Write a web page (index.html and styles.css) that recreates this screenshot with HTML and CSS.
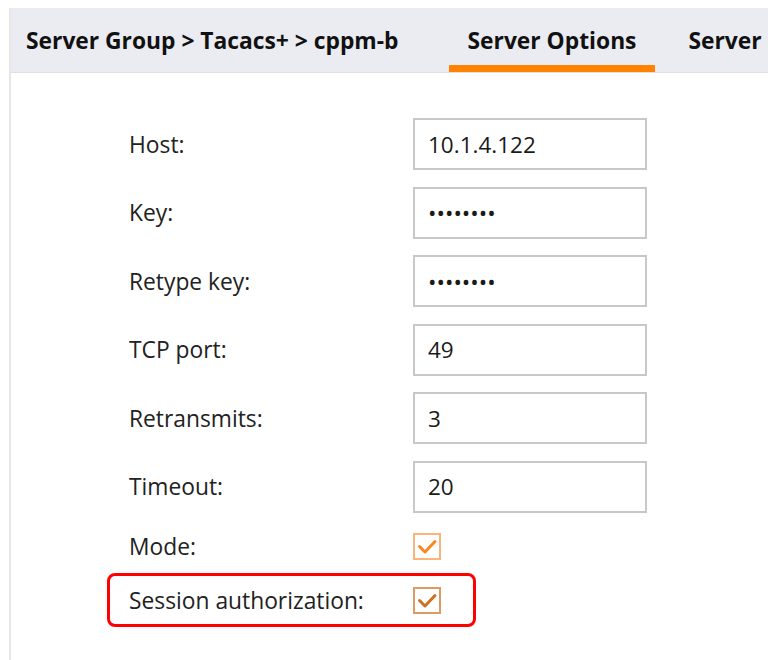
FILE: index.html
```html
<!DOCTYPE html>
<html lang="en">
<head>
<meta charset="utf-8">
<title>Server Options</title>
<link rel="stylesheet" href="styles.css">
</head>
<body>
<div class="page">
  <div class="header">
    <div class="crumb">Server Group &gt; Tacacs+ &gt; cppm-b</div>
    <div class="tab active">Server Options</div>
    <div class="tab">Server</div>
  </div>
  <div class="form">
    <div class="row">
      <label class="label" for="host">Host:</label>
      <input class="field" id="host" type="text" value="10.1.4.122">
    </div>
    <div class="row">
      <label class="label" for="key">Key:</label>
      <input class="field" id="key" type="password" value="abcdefgh">
    </div>
    <div class="row">
      <label class="label" for="rekey">Retype key:</label>
      <input class="field" id="rekey" type="password" value="abcdefgh">
    </div>
    <div class="row">
      <label class="label" for="port">TCP port:</label>
      <input class="field" id="port" type="text" value="49">
    </div>
    <div class="row">
      <label class="label" for="retr">Retransmits:</label>
      <input class="field" id="retr" type="text" value="3">
    </div>
    <div class="row">
      <label class="label" for="timeout">Timeout:</label>
      <input class="field" id="timeout" type="text" value="20">
    </div>
    <div class="row check-row">
      <span class="label">Mode:</span>
      <span class="checkbox">
        <svg viewBox="0 0 27 27" width="27" height="27"><path d="M5.5 13.5 L11 19 L21 8.5" fill="none" stroke="#f7891f" stroke-width="3" stroke-linecap="round" stroke-linejoin="round"/></svg>
      </span>
    </div>
    <div class="row check-row highlight">
      <span class="label">Session authorization:</span>
      <span class="checkbox dark">
        <svg viewBox="0 0 27 27" width="27" height="27"><path d="M5.5 13.5 L11 19 L21 8.5" fill="none" stroke="#cc7220" stroke-width="3" stroke-linecap="round" stroke-linejoin="round"/></svg>
      </span>
    </div>
  </div>
</div>
</body>
</html>
```

FILE: styles.css
```css
html, body {
  margin: 0;
  padding: 0;
  background: #ffffff;
}

body {
  font-family: "Open Sans", "Noto Sans", "Liberation Sans", sans-serif;
  color: #1e1e1e;
  width: 768px;
  height: 660px;
  overflow: hidden;
}

.page {
  margin-left: 9px;
  border-left: 2px solid #e6e6e6;
  height: 660px;
  box-sizing: border-box;
}

.header {
  margin-top: 8px;
  height: 64px;
  background: #ebecf1;
  border-bottom: 1px solid #dfe0e5;
  display: flex;
  align-items: stretch;
  white-space: nowrap;
  overflow: hidden;
  font-weight: 700;
  font-size: 22.8px;
  color: #111111;
}

.crumb {
  display: flex;
  align-items: center;
  padding-left: 15px;
}

.tab {
  display: flex;
  align-items: center;
  padding: 0 19px;
  border-top: 7px solid transparent;
  border-bottom: 7px solid transparent;
}

.tab + .tab {
  margin-left: 14px;
}

.tab.active {
  margin-left: 50px;
  border-bottom-color: #ff8200;
}

.form {
  display: flex;
  flex-direction: column;
  gap: 16.5px;
  padding: 45px 0 0 118px;
}

.row {
  display: grid;
  grid-template-columns: 284px 234px;
  align-items: center;
  height: 52px;
}

.label {
  font-size: 22.8px;
  color: #222222;
}

.field {
  box-sizing: border-box;
  width: 234px;
  height: 52px;
  margin: 0;
  border: 2px solid #c8c8c8;
  border-radius: 0;
  padding: 0 13px;
  font-family: "Open Sans", "Noto Sans", sans-serif;
  font-size: 22.5px;
  color: #1a1a1a;
  background: #ffffff;
  outline: none;
}

.check-row {
  height: 34px;
}

.checkbox {
  box-sizing: border-box;
  width: 28px;
  height: 27px;
  border: 2px solid #fbb47a;
  display: flex;
  align-items: center;
  justify-content: center;
}

.checkbox svg {
  display: block;
  flex: none;
}

.checkbox.dark {
  border-color: #dd9a62;
}

.highlight {
  box-sizing: border-box;
  height: 54px;
  width: 369px;
  margin-top: -6.5px;
  margin-left: -22px;
  padding-left: 19px;
  grid-template-columns: 284px auto;
  border: 3px solid #ff0000;
  border-radius: 8px;
}
```
